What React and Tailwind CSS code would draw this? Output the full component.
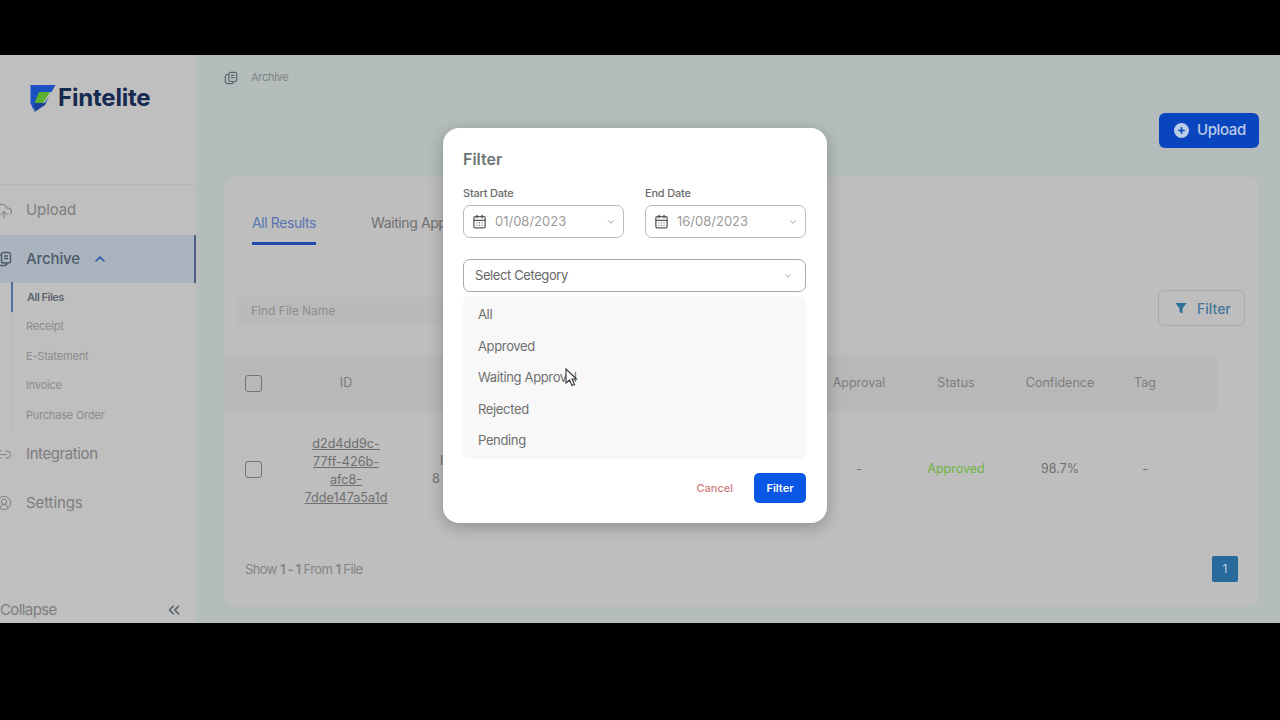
import React from 'react';
import { CloudUpload, Link2, CircleUserRound, ChevronUp, ChevronDown, ChevronsLeft, CalendarDays } from 'lucide-react';

const FilesIcon = ({ className }) => (
  <svg className={className} viewBox="0 0 16 16" fill="none" stroke="currentColor" strokeWidth="1.4">
    <rect x="5.5" y="1.5" width="9" height="10.5" rx="2" />
    <path d="M8 5h4M8 7.5h4" />
    <path d="M5.5 4H4a2.5 2.5 0 0 0-2.5 2.5v5A3 3 0 0 0 4.500 14.500h4a2.500 2.500 0 0 0 2.500-2.500" />
  </svg>
);

const Logo = () => (
  <svg className="w-[26px] h-[30px] shrink-0" viewBox="0 0 26 30">
    <path d="M0.500 2H25.500L21.500 9H13L3.500 27L0.500 20Z" fill="#1b4fc4" />
    <path d="M9 9H20L13 20H4.500Z" fill="#58b02c" />
    <path d="M4.500 20H14.500L19 13.500L15 22L4.500 29Z" fill="#1b3f9c" />
  </svg>
);

const subItems = ['All Files', 'Receipt', 'E-Statement', 'Invoice', 'Purchase Order'];
const categories = ['All', 'Approved', 'Waiting Approval', 'Rejected', 'Pending'];

const Sidebar = () => (
  <aside className="w-[196px] shrink-0 bg-[#bfbfbf] flex flex-col">
    <div className="h-[130px] shrink-0 border-b border-[#b6b6b6] pl-[30px] pt-[28px]">
      <div className="flex items-center gap-[2px]">
        <Logo />
        <span className="text-[24px] leading-[28px] font-bold text-[#16294f] tracking-[-0.2px]">Fintelite</span>
      </div>
    </div>
    <div className="h-[50px] pt-[1px] shrink-0 flex items-center text-[#7d7d7d]">
      <CloudUpload className="w-[18px] h-[18px] -ml-[5px] mr-[13px]" strokeWidth={1.4} />
      <span className="text-[15px] tracking-[-0.1px]">Upload</span>
    </div>
    <div className="h-[48px] shrink-0 flex items-center bg-[#a9b4bf] border-r-2 border-[#4d5f7c] text-[#4e5a68]">
      <FilesIcon className="w-[16px] h-[16px] -ml-[4px] mr-[14px]" />
      <span className="text-[15px] font-medium tracking-[-0.1px]">Archive</span>
      <ChevronUp className="w-[16px] h-[16px] ml-[12px] text-[#2f5fae]" strokeWidth={2.6} />
    </div>
    <div className="ml-[11px] h-[147px] -mt-px shrink-0 border-l border-[#b4b4b4] relative">
      {subItems.map((item, i) => (
        <div key={item} className={`h-[29.500px] flex items-center pl-[14px] text-[11px] ${i === 0 ? 'font-semibold text-[#5e6670] border-l-2 border-[#4d6f9c] -ml-px tracking-[-0.5px]' : 'text-[#8b8b8b] tracking-[-0.2px]'}`}>
          {item}
        </div>
      ))}
    </div>
    <div className="h-[48px] mt-px shrink-0 flex items-center text-[#7d7d7d]">
      <Link2 className="w-[17px] h-[17px] -ml-[5px] mr-[14px]" strokeWidth={1.4} />
      <span className="text-[15px] tracking-[-0.4px]">Integration</span>
    </div>
    <div className="h-[48px] mt-px shrink-0 flex items-center text-[#7d7d7d]">
      <CircleUserRound className="w-[16px] h-[16px] -ml-[4px] mr-[14px]" strokeWidth={1.4} />
      <span className="text-[15px] tracking-[-0.1px]">Settings</span>
    </div>
    <div className="mt-auto h-[26px] flex items-center justify-between pr-[13px] text-[#7d7d7d]">
      <span className="text-[15px] tracking-[-0.6px]">Collapse</span>
      <ChevronsLeft className="w-[18px] h-[18px] text-[#57606b]" strokeWidth={2.2} />
    </div>
  </aside>
);

const Main = () => (
  <main className="flex-1 min-w-0 bg-[#b4bcbc] pl-[29px] pr-[22px] flex flex-col">
    <div className="h-[45px] flex items-center gap-[13px] -ml-[1px] text-[#64707a]">
      <FilesIcon className="w-[14px] h-[14px] text-[#5a6670]" />
      <span className="text-[11px] tracking-[-0.3px] text-[#7d8484]">Archive</span>
    </div>
    <div className="mt-[13px] flex justify-end -mr-px">
      <button className="w-[100px] h-[35px] pl-[15px] rounded-[6px] bg-[#0a45c0] flex items-center gap-[8px] text-[#bccbe6] text-[15px] font-medium tracking-[-0.4px]">
        <svg className="w-[15px] h-[15px]" viewBox="0 0 16 16">
          <circle cx="8" cy="8" r="8" fill="#bccbe6" />
          <path d="M8 4.500v7M4.500 8h7" stroke="#0a45c0" strokeWidth="1.800" />
        </svg>
        Upload
      </button>
    </div>
    <section className="mt-[29px] h-[429px] rounded-[8px] bg-[#bebebe] flex flex-col overflow-hidden">
      <div className="h-[68px] pl-[27px] pt-[36px] flex gap-[55px] text-[14px] leading-[20px] tracking-[-0.4px] shrink-0">
        <div className="w-[64px] h-[32px] border-b-[3px] border-[#1e4bb0] text-[#5874b0] whitespace-nowrap">All Results</div>
        <div className="text-[#6f6f6f] whitespace-nowrap">Waiting Approval</div>
      </div>
      <div className="h-[110px] pl-[12px] pr-[13px] flex items-start justify-between shrink-0">
        <div className="mt-[52px] w-[330px] h-[28px] rounded-[4px] bg-[#bababa] pl-[14px] flex items-center text-[12px] text-[#8d8d8d]">Find File Name</div>
        <button className="mt-[45px] w-[87px] h-[36px] pl-[16px] rounded-[6px] border border-[#a6adb1] flex items-center gap-[10px] text-[14px] font-medium text-[#44759a]">
          <svg className="w-[12px] h-[12px]" viewBox="0 0 12 12"><path d="M0.500 1h11L7.500 6.500V11.500L4.500 10V6.500Z" fill="#2f6f99" /></svg>
          Filter
        </button>
      </div>
      <div className="h-[57px] pb-[1px] mr-[41px] bg-[#b8b8b8] grid grid-cols-[57px_128px_401px_96px_98px_110px_60px_1fr] items-center text-[12.500px] text-[#7d7d7d] text-center shrink-0">
        <span className="ml-[20px] w-[17px] h-[17px] rounded-[3px] border border-[#747474]" />
        <span>ID</span>
        <span />
        <span>Approval</span>
        <span>Status</span>
        <span>Confidence</span>
        <span>Tag</span>
      </div>
      <div className="h-[113px] pt-[2px] mr-[41px] grid grid-cols-[57px_128px_401px_96px_98px_110px_60px_1fr] items-center text-[12.500px] text-[#6f6f6f] text-center shrink-0">
        <span className="ml-[20px] w-[17px] h-[17px] rounded-[3px] border border-[#747474]" />
        <span className="mt-[2px] underline leading-[18px] text-[12.600px]">d2d4dd9c-<br />77ff-426b-<br />afc8-<br />7dde147a5a1d</span>
        <span className="text-left pl-[22px] leading-[18px]"><span className="pl-[8px]">Invoice</span><br />8</span>
        <span>-</span>
        <span className="text-[#6fb244]">Approved</span>
        <span>98.7%</span>
        <span>-</span>
      </div>
      <div className="flex-1 pl-[20px] pr-[20px] pt-[6px] flex items-center justify-between">
        <span className="mt-[2px] text-[13px] tracking-[-0.6px] text-[#858585]">Show <b className="font-semibold">1 - 1</b> From <b className="font-semibold">1</b> File</span>
        <span className="w-[26px] h-[26px] rounded-[2px] bg-[#286a9c] flex items-center justify-center text-[12px] text-[#b6cfe0]">1</span>
      </div>
    </section>
  </main>
);

const DateField = ({ label, value }) => (
  <div className="w-[161px]">
    <div className="text-[11px] leading-[14px] font-medium tracking-[-0.2px] text-[#6b6b6b]">{label}</div>
    <div className="mt-[5px] h-[33px] rounded-[7px] border border-[#b9b9b9] pl-[8px] pr-[7px] flex items-center">
      <CalendarDays className="w-[15px] h-[15px] text-[#555]" strokeWidth={2} />
      <span className="ml-[8px] text-[13px] text-[#9a9a9a]">{value}</span>
      <ChevronDown className="ml-auto w-[10px] h-[10px] text-[#8a8a8a]" strokeWidth={2} />
    </div>
  </div>
);

const FilterModal = () => (
  <div className="absolute left-[443px] top-[73px] w-[384px] h-[395px] rounded-[16px] bg-white shadow-[0_4px_16px_rgba(0,0,0,0.25)] pl-[20px] pr-[21px] pt-[21px] flex flex-col">
    <h2 className="text-[16px] leading-[20px] font-semibold text-[#6a7573]">Filter</h2>
    <div className="mt-[17px] flex justify-between">
      <DateField label="Start Date" value="01/08/2023" />
      <DateField label="End Date" value="16/08/2023" />
    </div>
    <div className="mt-[21px] h-[33px] rounded-[7px] border border-[#a8a8a8] pl-[11px] pr-[12px] flex items-center justify-between text-[13px] tracking-[-0.4px] text-[#666]">
      Select Cetegory
      <ChevronDown className="w-[10px] h-[10px] text-[#8a8a8a]" strokeWidth={2} />
    </div>
    <ul className="mt-[4px] h-[163px] rounded-[6px] bg-[#f8f8f8] pl-[15px] pt-[3px] text-[13px] tracking-[-0.35px] text-[#6f6f6f]">
      {categories.map((c) => (
        <li key={c} className="h-[31.500px] flex items-center">{c}</li>
      ))}
    </ul>
    <div className="mt-[14px] flex items-center justify-end">
      <button className="text-[11px] font-medium text-[#cf7a7a]">Cancel</button>
      <button className="ml-[21px] w-[52px] h-[30px] rounded-[5px] bg-[#0a57e6] text-white text-[11px] font-semibold">Filter</button>
    </div>
  </div>
);

export default function App() {
  return (
    <div className="w-[1280px] h-[720px] bg-black pt-[55px] overflow-hidden font-['Inter',sans-serif]">
      <div className="relative h-[568px] flex overflow-hidden">
        <Sidebar />
        <Main />
        <FilterModal />
        {/* mouse pointer from the recording */}
        <svg className="absolute left-[565px] top-[313px] w-[13px] h-[19px]" viewBox="0 0 13 19">
          <path d="M1 1V15L4.500 12L7 17.500L9.500 16.500L7 11H11.500Z" fill="#fff" stroke="#333" strokeWidth="1.100" />
        </svg>
      </div>
    </div>
  );
}
